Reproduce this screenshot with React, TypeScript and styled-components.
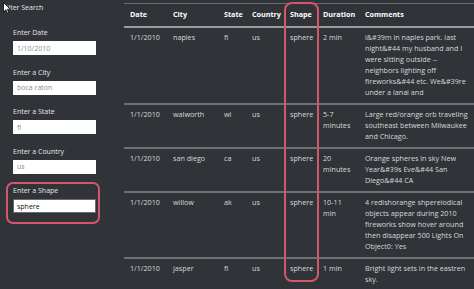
import React from 'react';
import styled, { createGlobalStyle } from 'styled-components';

// 목격 데이터
interface Sighting {
    date: string;
    city: string;
    state: string;
    country: string;
    shape: string;
    duration: string;
    comments: string;
}

const sightings: Sighting[] = [
    {
        date: '1/1/2010',
        city: 'naples',
        state: 'fl',
        country: 'us',
        shape: 'sphere',
        duration: '2 min',
        comments:
            'i&#39m in naples park. last night&#44 my husband and I were sitting outside -- neighbors lighting off fireworks&#44 etc. We&#39re under a lanai and',
    },
    {
        date: '1/1/2010',
        city: 'walworth',
        state: 'wi',
        country: 'us',
        shape: 'sphere',
        duration: '5-7 minutes',
        comments: 'Large red/orange orb traveling southeast between Milwaukee and Chicago.',
    },
    {
        date: '1/1/2010',
        city: 'san diego',
        state: 'ca',
        country: 'us',
        shape: 'sphere',
        duration: '20 minutes',
        comments: 'Orange spheres in sky New Year&#39s Eve&#44 San Diego&#44 CA',
    },
    {
        date: '1/1/2010',
        city: 'willow',
        state: 'ak',
        country: 'us',
        shape: 'sphere',
        duration: '10-11 min',
        comments:
            '4 redishorange shpereiodical objects appear during 2010 fireworks show hover around then disappear 500 Lights On Object0: Yes',
    },
    {
        date: '1/1/2010',
        city: 'jasper',
        state: 'fl',
        country: 'us',
        shape: 'sphere',
        duration: '1 min',
        comments: 'Bright light sets in the eastren sky.',
    },
];

const filters = [
    { label: 'Enter Date', value: '1/10/2010' },
    { label: 'Enter a City', value: 'boca raton' },
    { label: 'Enter a State', value: 'fl' },
    { label: 'Enter a Country', value: 'us' },
    { label: 'Enter a Shape', value: 'sphere', active: true },
];

// width 없는 컬럼은 남은 폭을 사용, padRight 는 셀 오른쪽 여백
const columns: { key: keyof Sighting; title: string; width?: number; padRight?: number }[] = [
    { key: 'date', title: 'Date', width: 43 },
    { key: 'city', title: 'City', width: 51 },
    { key: 'state', title: 'State', width: 28 },
    { key: 'country', title: 'Country', width: 38 },
    { key: 'shape', title: 'Shape', width: 33 },
    { key: 'duration', title: 'Duration', width: 42, padRight: 8 },
    { key: 'comments', title: 'Comments' },
];

export default function App() {
    return (
        <>
            <GlobalStyle />
            <Page>
                <Sidebar>
                    <Title>Filter Search</Title>
                    <Cursor width="8" height="12" viewBox="0 0 8 12">
                        <path d="M0.5 0.5 L0.5 10 L2.8 7.8 L4.4 11.3 L5.8 10.7 L4.3 7.3 L7.3 7.3 Z" fill="#fff" stroke="#000" strokeWidth="0.8" />
                    </Cursor>
                    <FilterList>
                        {filters.map((f) => (
                            <FilterGroup key={f.label} $active={!!f.active}>
                                <Label>{f.label}</Label>
                                <FilterInput $active={!!f.active} defaultValue={f.value} />
                            </FilterGroup>
                        ))}
                    </FilterList>
                </Sidebar>

                <TableWrap>
                    <Table>
                        <colgroup>
                            {columns.map((c) => (
                                <col key={c.key} style={c.width ? { width: c.width } : undefined} />
                            ))}
                        </colgroup>
                        <thead>
                            <tr>
                                {columns.map((c) => (
                                    <Th key={c.key}>{c.title}</Th>
                                ))}
                            </tr>
                        </thead>
                        <tbody>
                            {sightings.map((s, i) => (
                                <tr key={i}>
                                    {columns.map((c) => (
                                        <Td key={c.key} $padRight={c.padRight ?? 2}>
                                            {s[c.key]}
                                        </Td>
                                    ))}
                                </tr>
                            ))}
                        </tbody>
                    </Table>
                    <ColumnHighlight />
                </TableWrap>
            </Page>
        </>
    );
}

const GlobalStyle = createGlobalStyle`
    html, body {
        margin: 0;
        padding: 0;
        background: #303338;
    }
    body {
        font-family: 'Open Sans', 'Noto Sans', sans-serif;
        overflow: hidden;
    }
`;

const Page = styled.div`
    display: grid;
    grid-template-columns: 124px 1fr;
    width: 474px;
    height: 289px;
    background: #303338;
`;

const Sidebar = styled.aside`
    position: relative;
    padding: 2px 0 0 3px;
    color: #e6e6e6;
`;

const Title = styled.div`
    font-size: 7px;
    line-height: 12px;
`;

const Cursor = styled.svg`
    position: absolute;
    left: 3px;
    top: 2px;
`;

const FilterList = styled.div`
    display: flex;
    flex-direction: column;
    gap: 11.5px;
    padding: 13px 0 0 10px;
`;

const FilterGroup = styled.div<{ $active: boolean }>`
    position: relative;
    display: flex;
    flex-direction: column;
    gap: 2px;

    &::before {
        content: '';
        display: ${(p) => (p.$active ? 'block' : 'none')};
        position: absolute;
        top: -3px;
        left: -7px;
        width: 94px;
        height: 42px;
        box-sizing: border-box;
        border: 2px solid #d55669;
        border-radius: 7px;
    }
`;

const Label = styled.label`
    font-size: 7px;
    line-height: 12px;
    color: #e6e6e6;
`;

const FilterInput = styled.input<{ $active: boolean }>`
    box-sizing: border-box;
    width: 83px;
    height: 14px;
    margin: 0;
    padding: 0 3px;
    font-family: inherit;
    font-size: 7px;
    background: #fff;
    color: ${(p) => (p.$active ? '#111' : '#8c8c8c')};
    border: ${(p) => (p.$active ? '1px solid #6b6b6b' : '1px solid #fff')};
    border-radius: 0;
    outline: none;
`;

const TableWrap = styled.div`
    position: relative;
    padding-top: 3px;
`;

const Table = styled.table`
    width: 100%;
    table-layout: fixed;
    border-collapse: collapse;
    border-top: 1px solid #6a6d72;
    font-size: 7.2px;
    line-height: 11px;
`;

const Th = styled.th`
    padding: 5px 2px 6px 6px;
    text-align: left;
    font-weight: 700;
    color: #ffffff;
    border-bottom: 2px solid #9a9ca0;
    white-space: nowrap;
`;

const Td = styled.td<{ $padRight: number }>`
    padding: 4px ${(p) => p.$padRight}px 5px 6px;
    vertical-align: top;
    color: #d8d8d8;
    border-bottom: 2px solid #6e7176;

    tr:last-child & {
        border-bottom: none;
    }
`;

// 선택한 Shape 컬럼 강조 박스
const ColumnHighlight = styled.div`
    position: absolute;
    left: 160px;
    top: 2px;
    width: 35px;
    height: 280px;
    box-sizing: border-box;
    border: 2px solid #d55669;
    border-radius: 8px;
    pointer-events: none;
`;
